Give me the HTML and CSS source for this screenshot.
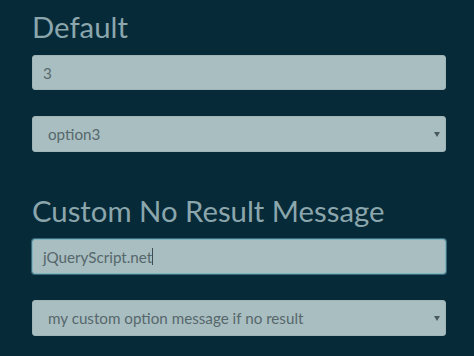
FILE: index.html
```html
<!DOCTYPE html>
<html>
<head>
<meta charset="utf-8">
<link rel="stylesheet" href="styles.css">
</head>
<body>
<div class="page">
  <section class="group">
    <h2 class="title">Default</h2>
    <input class="field" type="text" value="3">
    <div class="select-wrap">
      <select class="field select">
        <option>option3</option>
      </select>
    </div>
  </section>
  <section class="group group-second">
    <h2 class="title">Custom No Result Message</h2>
    <div class="field field-focus">jQueryScript.net<span class="caret"></span></div>
    <div class="select-wrap">
      <select class="field select">
        <option>my custom option message if no result</option>
      </select>
    </div>
  </section>
</div>
</body>
</html>
```

FILE: styles.css
```css
html, body {
  margin: 0;
  padding: 0;
  background: #062a38;
}
.page {
  width: 414px;
  padding: 9px 0 0 32px;
  font-family: Lato, "Open Sans", sans-serif;
}
.group {
  display: flex;
  flex-direction: column;
}
.group-second {
  margin-top: 41px;
}
.title {
  margin: 0 0 10px 0;
  font-size: 29.3px;
  line-height: 36px;
  font-weight: 400;
  color: #8ba6ac;
}
.field {
  box-sizing: border-box;
  width: 414px;
  height: 35px;
  margin: 0;
  padding: 0 10px;
  border: 1px solid #9fb4b7;
  border-radius: 3px;
  background: #a9bec0;
  color: #56676c;
  font-family: Lato, "Open Sans", sans-serif;
  font-size: 15.2px;
  outline: none;
}
.field-focus {
  display: flex;
  align-items: center;
  border-color: #7fb3bd;
  box-shadow: 0 0 0 1px rgba(110, 170, 185, 0.5);
}
.caret {
  display: inline-block;
  width: 1px;
  height: 17px;
  background: #3d4d52;
}
.select-wrap {
  position: relative;
  margin-top: 26px;
}
.select {
  height: 36px;
  padding-left: 15px;
  appearance: none;
  -webkit-appearance: none;
}
.select-wrap::after {
  content: "";
  position: absolute;
  left: 402px;
  top: 16px;
  border-left: 3px solid transparent;
  border-right: 3px solid transparent;
  border-top: 5px solid #4a5a5f;
  pointer-events: none;
}
```
